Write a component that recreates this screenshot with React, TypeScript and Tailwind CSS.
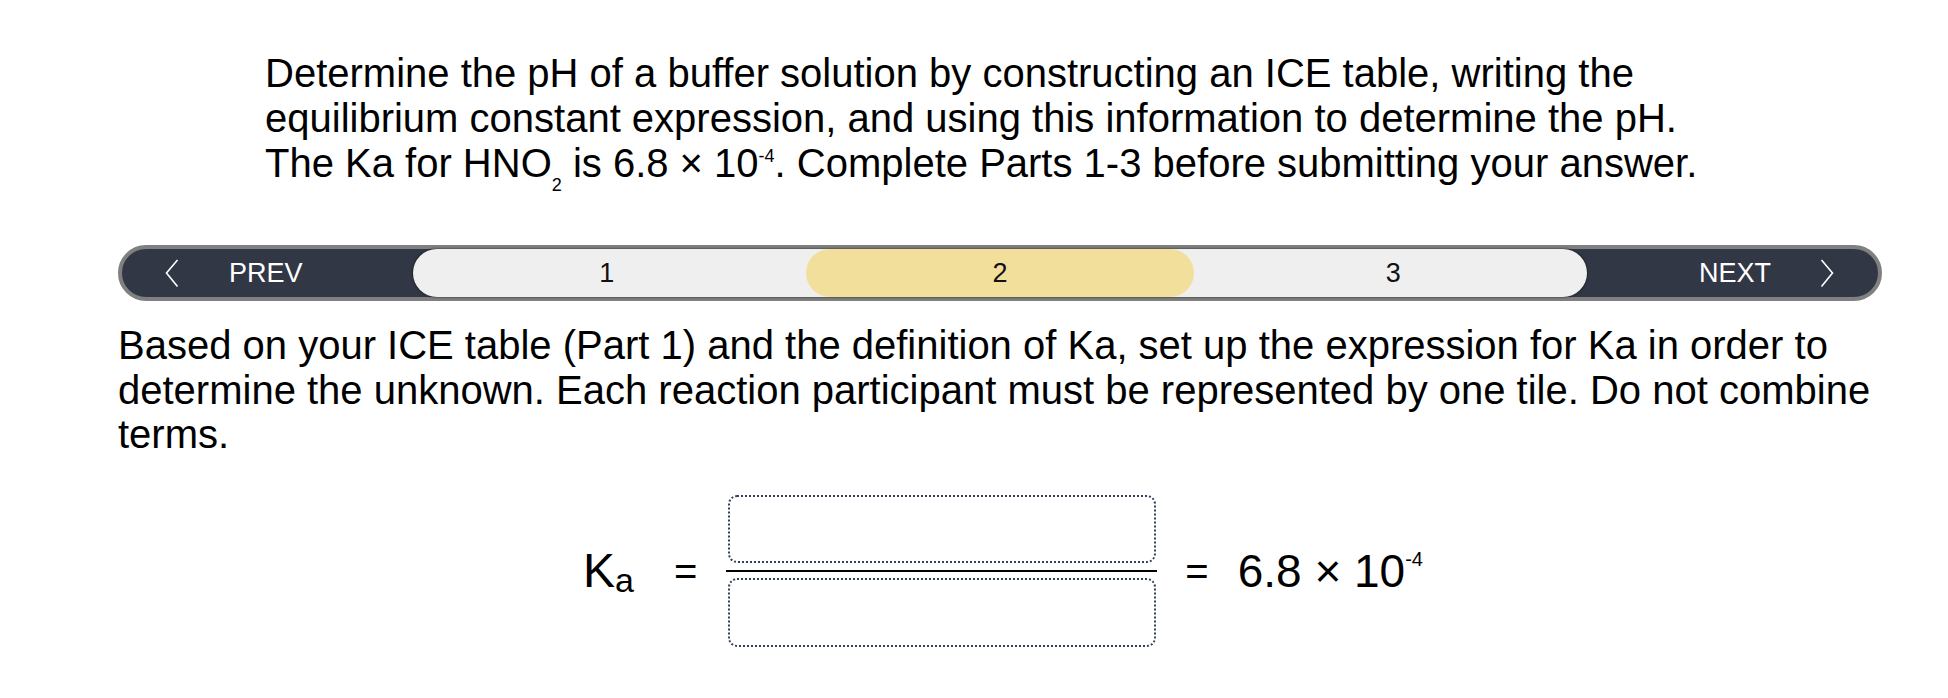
import React from "react";

function ChevronLeft() {
  return (
    <svg width="14" height="29" viewBox="0 0 14 29" className="shrink-0">
      <polyline points="12.5,1 1.5,14 12.5,27.5" fill="none" stroke="#ffffff" strokeWidth="1.6" />
    </svg>
  );
}

function ChevronRight() {
  return (
    <svg width="14" height="29" viewBox="0 0 14 29" className="shrink-0">
      <polyline points="1.5,1 12.5,14 1.5,27.5" fill="none" stroke="#ffffff" strokeWidth="1.6" />
    </svg>
  );
}

function DropBox({ className }: { className?: string }) {
  return (
    <div
      className={`mx-auto w-[428px] rounded-[9px] border-2 border-dotted border-[#33415a] bg-white ${className ?? ""}`}
    />
  );
}

export default function App() {
  return (
    <div className="w-[1948px] h-[698px] bg-white text-black font-['Liberation_Sans',Arial,sans-serif] overflow-hidden">
      {/* Intro paragraph */}
      <div className="pt-[51px] pl-[265px] text-[40px] leading-[45px] whitespace-nowrap">
        Determine the pH of a buffer solution by constructing an ICE table, writing the
        <br />
        equilibrium constant expression, and using this information to determine the pH.
        <br />
        The Ka for HNO
        <span className="relative top-[14px] text-[18px] leading-none">2</span> is 6.8 × 10
        <span className="relative top-[-15px] text-[18px] leading-none">-4</span>. Complete Parts 1-3 before
        submitting your answer.
      </div>

      {/* Navigation bar */}
      <div className="mt-[59px] ml-[118px] w-[1764px] h-[56px] rounded-full border-[4px] border-[#808080] bg-[#323746] flex text-[27px] leading-none">
        <div className="w-[291px] flex items-center pl-[43px] gap-[50px] text-white">
          <ChevronLeft />
          <span>PREV</span>
        </div>
        <div className="flex-1 flex rounded-full bg-[#efefef] shadow-[0_0_2px_1px_rgba(0,0,0,0.35)] text-[#111]">
          <div className="flex-1 flex items-center justify-center">1</div>
          <div className="flex-1 flex px-[6px]">
            <div className="flex-1 flex items-center justify-center rounded-full bg-[#f2df9b]">2</div>
          </div>
          <div className="flex-1 flex items-center justify-center">3</div>
        </div>
        <div className="w-[291px] flex items-center justify-end pr-[44px] gap-[49px] text-white">
          <span>NEXT</span>
          <ChevronRight />
        </div>
      </div>

      {/* Instructions */}
      <div className="mt-[22px] pl-[118px] text-[40px] leading-[44.5px] whitespace-nowrap">
        Based on your ICE table (Part 1) and the definition of Ka, set up the expression for Ka in order to
        <br />
        determine the unknown. Each reaction participant must be represented by one tile. Do not combine
        <br />
        terms.
      </div>

      {/* Equation */}
      <div className="mt-[38px] pl-[583px] flex items-center">
        <div className="text-[48px] leading-none whitespace-nowrap">
          K<span className="relative top-[5px] text-[34px] leading-none">a</span>
        </div>
        <div className="ml-[40px] text-[40px] leading-none">=</div>
        <div className="ml-[29px] w-[431px] flex flex-col">
          <DropBox className="h-[68px]" />
          <div className="mt-[7px] h-[2px] bg-black" />
          <DropBox className="mt-[6px] h-[69px]" />
        </div>
        <div className="ml-[28px] text-[40px] leading-none">=</div>
        <div className="ml-[29px] text-[46px] leading-none whitespace-nowrap">
          6.8 × 10<span className="relative top-[-21px] text-[20px] leading-none">-4</span>
        </div>
      </div>
    </div>
  );
}
